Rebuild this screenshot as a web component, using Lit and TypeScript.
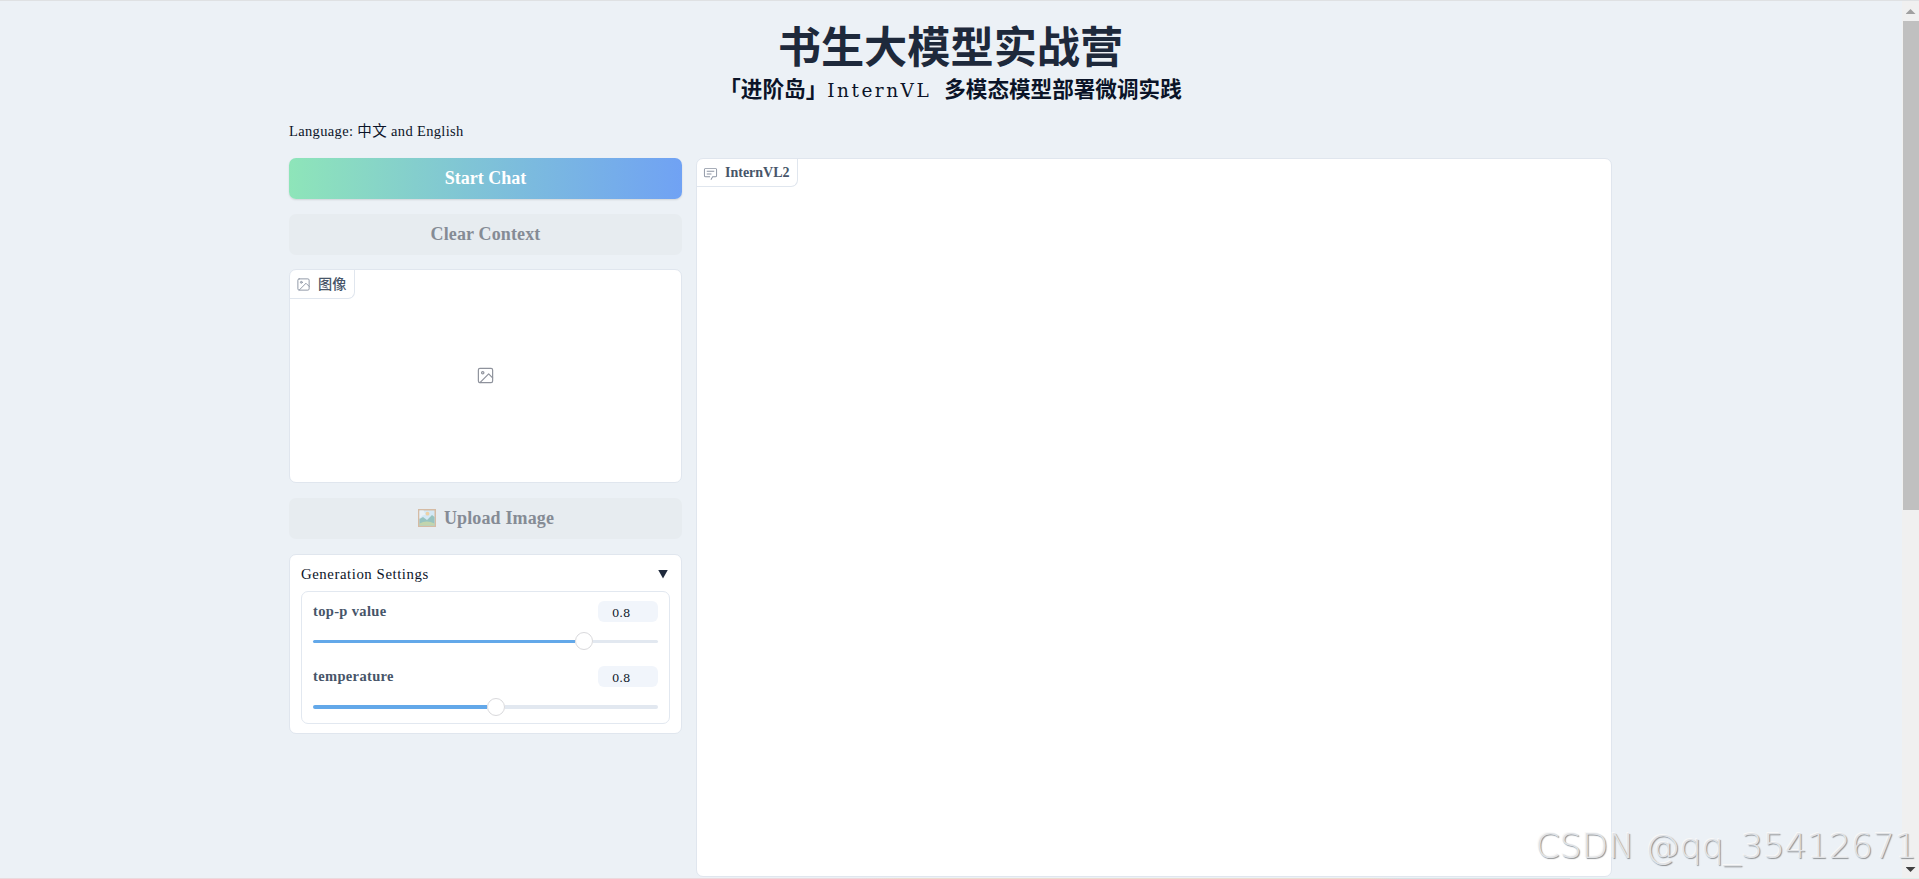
import { LitElement, html, css } from "lit";
import { customElement, property } from "lit/decorators.js";

const imageIcon = html`<svg viewBox="0 0 24 24" fill="none" stroke="currentColor" stroke-width="1.5" stroke-linecap="round" stroke-linejoin="round">
  <rect x="3" y="3" width="18" height="18" rx="2" ry="2"></rect>
  <circle cx="8.5" cy="8.5" r="1.5"></circle>
  <polyline points="21 15 16 10 5 21"></polyline>
</svg>`;

const chatIcon = html`<svg viewBox="0 0 32 32" fill="currentColor">
  <path d="M17.74 30L16 29l4-7h6a2 2 0 0 0 2-2V8a2 2 0 0 0-2-2H6a2 2 0 0 0-2 2v12a2 2 0 0 0 2 2h9v2H6a4 4 0 0 1-4-4V8a4 4 0 0 1 4-4h20a4 4 0 0 1 4 4v12a4 4 0 0 1-4 4h-4.84Z"></path>
  <path d="M8 10h16v2H8zm0 6h10v2H8z"></path>
</svg>`;

const pictureEmoji = html`<svg viewBox="0 0 18 18">
  <rect width="18" height="18" fill="#c58c5b"></rect>
  <rect x="1.5" y="1.5" width="15" height="15" fill="#c3e6fa"></rect>
  <path d="M1.500 10L5 8l4 3 5-5 2.500 2v8.500h-15z" fill="#4a9c91"></path>
  <path d="M1.500 1.500h4l2 4-3 1-3 3z" fill="#eef7fd"></path>
  <circle cx="9.500" cy="4.700" r="1.900" fill="#f3b75f"></circle>
  <path d="M1.500 14.500q7-4 15 0v2h-15z" fill="#9fc06c"></path>
</svg>`;

@customElement("setting-slider")
export class SettingSlider extends LitElement {
  @property() label = "";
  @property() value = "";
  @property({ type: Number }) fill = 0;
  @property({ type: Number }) thick = 3;

  static styles = css`
    :host { display: block; height: 65px; }
    .head { display: flex; justify-content: space-between; height: 22px; }
    .label { font: bold 14.5px/21px "Liberation Serif", serif; letter-spacing: .35px; color: #475569; white-space: nowrap; }
    .value { box-sizing: border-box; width: 60px; height: 21px; border-radius: 6px; background: #f1f5fb; padding: 2px 0 0 14px; font: 11.5px/21px "DejaVu Serif", serif; color: #0b1428; }
    .track { display: flex; align-items: center; height: 18px; margin-top: 9px; }
    .done { background: #63a8e9; border-radius: 2px 0 0 2px; }
    .knob { box-sizing: border-box; width: 18px; height: 18px; flex: none; border-radius: 50%; border: 1px solid #d9d9dc; background: #fff; }
    .rest { flex: 1; background: #e2e8f0; border-radius: 0 2px 2px 0; }
    .t3 { height: 3px; }
    .t4 { height: 4px; }
    .low { margin-top: 10px; }
  `;

  render() {
    return html`
      <div class="head"><div class="label">${this.label}</div><div class="value">${this.value}</div></div>
      <div class="track ${this.thick === 4 ? "low" : ""}">
        <div class="done t${this.thick}" style="width:${this.fill}px"></div>
        <div class="knob"></div>
        <div class="rest t${this.thick}"></div>
      </div>`;
  }
}

@customElement("app-root")
export class AppRoot extends LitElement {
  static styles = css`
    :host { display: block; position: relative; box-sizing: border-box; width: 1919px; height: 879px; overflow: hidden; background: #ecf1f6; font-family: "Liberation Serif", "Noto Sans CJK SC", serif; color: #0b1428; }
    * { box-sizing: border-box; }
    .frame { display: flex; height: 879px; border-top: 1px solid #dfe1e3; }
    .page { flex: 1; padding-left: 289px; }
    .content { width: 1323px; }
    h1, h2 { margin: 0; text-align: center; white-space: nowrap; }
    h1 { padding-top: 13px; height: 73px; font: bold 43.2px/60px "Noto Sans CJK SC", sans-serif; color: #1e293b; }
    h2 { height: 34px; font: bold 21.6px/34px "Liberation Mono", "Noto Sans CJK SC", monospace; color: #0b1428; }
    .latin { display: inline-block; width: 104px; font: 18.500px/20px "DejaVu Serif", serif; letter-spacing: 2.500px; text-align: left; }
    .language { margin-top: 12px; height: 38px; font-size: 14.500px; letter-spacing: .35px; line-height: 22px; white-space: nowrap; }
    .columns { display: flex; gap: 14px; }
    .side { width: 393px; display: flex; flex-direction: column; }
    .button { display: flex; align-items: center; justify-content: center; height: 41px; margin-bottom: 15px; border-radius: 7px; font-weight: bold; font-size: 18px; white-space: nowrap; }
    .primary { background: linear-gradient(to right, #8ee5b9, #80c5d5 45%, #70a2f4); color: #fff; box-shadow: 0 1px 2px rgba(0,0,0,.12); }
    .muted { background: #e7ecf0; color: #858b95; letter-spacing: .13px; }
    .muted svg { width: 18px; height: 18px; margin: -1px 8px 0 1px; opacity: .5; }
    .box { border: 1px solid #e0e6ee; border-radius: 7px; background: #fff; }
    .image { height: 214px; margin: -1px 0 15px; display: grid; grid-template-rows: 29px 1fr 30px; }
    .tag { display: flex; align-items: center; width: max-content; height: 29px; padding: 0 8px 0 6px; border: solid #e0e6ee; border-width: 0 1px 1px 0; border-bottom-right-radius: 7px; font-weight: bold; font-size: 14.200px; color: #475569; white-space: nowrap; }
    .tag svg { width: 15px; height: 15px; margin-right: 7px; color: #8c94a3; }
    .tag .cjk { font: 500 14.200px/20px "Noto Sans CJK SC", sans-serif; margin-top: -2px; }
    .empty { display: flex; align-items: center; justify-content: center; color: #8e929c; }
    .empty svg { width: 19px; height: 19px; margin-right: 1px; }
    .settings { height: 180px; padding: 8px 11px 0; }
    .summary { display: flex; justify-content: space-between; align-items: center; height: 22px; font-size: 14.800px; letter-spacing: .56px; }
    .arrow { margin-right: 2px; width: 10px; height: 9px; background: #1e293b; clip-path: polygon(0 0, 100% 0, 50% 100%); }
    .group { margin-top: 6px; height: 133px; border: 1px solid #e2e8f0; border-radius: 7px; padding: 9px 11px 0; }
    .chat { width: 916px; height: 719px; }
    .chat .tag { height: 28px; padding: 1px 7px 0 6px; font-size: 14px; }
    .scroll { display: flex; flex-direction: column; width: 17px; background: #f0f0f0; align-items: center; }
    .up { width: 10px; height: 5px; margin: 8px 0 7px; background: #a0a0a0; clip-path: polygon(50% 0, 100% 100%, 0 100%); }
    .thumb { width: 16px; height: 489px; background: #c0c0c0; align-self: flex-end; }
    .down { width: 10px; height: 5px; margin: auto 0 7px; background: #404040; clip-path: polygon(0 0, 100% 0, 50% 100%); }
    .edge { position: absolute; left: 0; right: 0; bottom: 0; height: 1px; background: linear-gradient(to right, #edd8dc 0 860px, #ecdccf 900px 1370px, #d8e1e2 1400px 1570px, #e0f0ec 1570px); }
    .mark { position: absolute; right: 2px; bottom: 10px; font: 200 34.600px/46px "DejaVu Sans", sans-serif; color: #e1e3e6; text-shadow: 1px 1px 1px #8c8f92, -1px -1px 0 #f8f8f8; white-space: nowrap; }
  `;

  render() {
    return html`
      <div class="frame">
        <main class="page"><div class="content">
          <h1><span>书生大模型实战营</span></h1>
          <h2><span>「进阶岛」<span class="latin">InternVL</span> 多模态模型部署微调实践</span></h2>
          <div class="language"><span>Language: 中文 and English</span></div>
          <div class="columns">
            <div class="side">
              <div class="button primary"><span>Start Chat</span></div>
              <div class="button muted"><span>Clear Context</span></div>
              <div class="box image">
                <div class="tag">${imageIcon}<span class="cjk">图像</span></div>
                <div class="empty">${imageIcon}</div>
              </div>
              <div class="button muted">${pictureEmoji}<span>Upload Image</span></div>
              <div class="box settings">
                <div class="summary"><span>Generation Settings</span><div class="arrow"></div></div>
                <div class="group">
                  <setting-slider label="top-p value" value="0.8" .fill=${262} .thick=${3}></setting-slider>
                  <setting-slider label="temperature" value="0.8" .fill=${174} .thick=${4}></setting-slider>
                </div>
              </div>
            </div>
            <div class="box chat"><div class="tag">${chatIcon}<span>InternVL2</span></div></div>
          </div>
        </div></main>
        <div class="scroll"><div class="up"></div><div class="thumb"></div><div class="down"></div></div>
      </div>
      <div class="edge"></div>
      <div class="mark">CSDN @qq_35412671</div>`;
  }
}
